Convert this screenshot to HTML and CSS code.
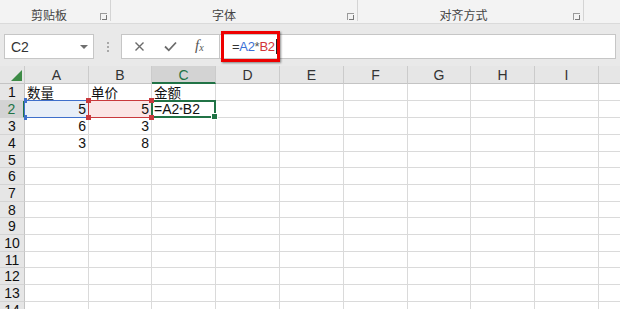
FILE: index.html
```html
<!DOCTYPE html>
<html>
<head>
<meta charset="utf-8">
<link rel="stylesheet" href="styles.css">
</head>
<body>
<div class="app">
  <div class="ribbon">
    <div class="group g1"><span class="glabel">剪贴板</span><span class="launcher"></span></div>
    <div class="group g2"><span class="glabel">字体</span><span class="launcher"></span></div>
    <div class="group g3"><span class="glabel">对齐方式</span><span class="launcher"></span></div>
    <div class="group g4"></div>
  </div>
  <div class="fbar">
    <div class="namebox"><span class="nbtext">C2</span><span class="nbarrow"></span></div>
    <div class="dots"><i></i><i></i><i></i></div>
    <div class="fbox">
      <div class="fbtns">
        <svg class="ico" width="11" height="11" viewBox="0 0 11 11"><path d="M1.5 1.5 L9.5 9.5 M9.5 1.5 L1.5 9.5" stroke="#6b6b6b" stroke-width="1.4" fill="none"/></svg>
        <svg class="ico" width="13" height="11" viewBox="0 0 13 11"><path d="M1 5.5 L4.8 9.3 L12 1.5" stroke="#6b6b6b" stroke-width="1.8" fill="none"/></svg>
        <span class="fx"><i>f</i><sub>x</sub></span>
      </div>
      <div class="finput">
        <span class="t-eq">=</span><span class="t-a">A2</span><span class="t-op">*</span><span class="t-b">B2</span><span class="caret"></span>
      </div>
      <div class="annot"></div>
    </div>
  </div>
  <div class="sheet">
    <div class="row head">
      <div class="corner"><span class="tri"></span></div><div>A</div><div>B</div><div class="hsel">C</div><div>D</div><div>E</div><div>F</div><div>G</div><div>H</div><div>I</div><div></div>
    </div>
    <div class="row"><div class="rh">1</div><div class="tl">数量</div><div class="tl">单价</div><div class="tl">金额</div><div></div><div></div><div></div><div></div><div></div><div></div><div></div></div>
    <div class="row"><div class="rh rsel">2</div><div class="num selA">5<i class="h htl"></i><i class="h hbl"></i></div><div class="num selB">5<i class="h htl"></i><i class="h hbl"></i><i class="h htr"></i><i class="h hbr"></i></div><div class="tl selC">=A2<span class="star">*</span>B2<i class="fill"></i></div><div></div><div></div><div></div><div></div><div></div><div></div><div></div></div>
    <div class="row"><div class="rh">3</div><div class="num">6</div><div class="num">3</div><div></div><div></div><div></div><div></div><div></div><div></div><div></div><div></div></div>
    <div class="row"><div class="rh">4</div><div class="num">3</div><div class="num">8</div><div></div><div></div><div></div><div></div><div></div><div></div><div></div><div></div></div>
    <div class="row short"><div class="rh">5</div><div></div><div></div><div></div><div></div><div></div><div></div><div></div><div></div><div></div><div></div></div>
    <div class="row"><div class="rh">6</div><div></div><div></div><div></div><div></div><div></div><div></div><div></div><div></div><div></div><div></div></div>
    <div class="row"><div class="rh">7</div><div></div><div></div><div></div><div></div><div></div><div></div><div></div><div></div><div></div><div></div></div>
    <div class="row short"><div class="rh">8</div><div></div><div></div><div></div><div></div><div></div><div></div><div></div><div></div><div></div><div></div></div>
    <div class="row"><div class="rh">9</div><div></div><div></div><div></div><div></div><div></div><div></div><div></div><div></div><div></div><div></div></div>
    <div class="row"><div class="rh">10</div><div></div><div></div><div></div><div></div><div></div><div></div><div></div><div></div><div></div><div></div></div>
    <div class="row short"><div class="rh">11</div><div></div><div></div><div></div><div></div><div></div><div></div><div></div><div></div><div></div><div></div></div>
    <div class="row"><div class="rh">12</div><div></div><div></div><div></div><div></div><div></div><div></div><div></div><div></div><div></div><div></div></div>
    <div class="row"><div class="rh">13</div><div></div><div></div><div></div><div></div><div></div><div></div><div></div><div></div><div></div><div></div></div>
    <div class="row"><div class="rh">14</div><div></div><div></div><div></div><div></div><div></div><div></div><div></div><div></div><div></div><div></div></div>
  </div>
</div>
</body>
</html>
```
FILE: styles.css
```css
html, body { margin: 0; padding: 0; }
body {
  width: 620px; height: 309px; overflow: hidden;
  background: #ffffff;
  font-family: "Liberation Sans", "Noto Sans CJK SC", sans-serif;
}
.app { width: 620px; height: 309px; display: flex; flex-direction: column; overflow: hidden; }

/* ribbon */
.ribbon {
  height: 23px; flex: none; display: flex;
  background: #f3f3f3; border-bottom: 1px solid #dadada;
}
.group {
  position: relative; height: 21px; border-right: 1px solid #d4d4d4;
  display: flex; justify-content: center; align-items: flex-end; padding-right: 12px; box-sizing: border-box;
}
.g1 { width: 111px; }
.g2 { width: 247px; padding-right: 20px; }
.g3 { width: 226px; padding-right: 14px; }
.g4 { flex: 1; border-right: none; }
.glabel { font-family: "Noto Sans CJK SC", sans-serif; font-size: 12px; color: #444; line-height: 14px; margin-bottom: -1px; }
.launcher {
  position: absolute; right: 3px; bottom: 1px; width: 6px; height: 6px;
  border-left: 1px solid #9a9a9a; border-top: 1px solid #9a9a9a;
}
.launcher::after {
  content: ""; position: absolute; left: 1px; top: 1px; width: 4px; height: 4px;
  border-right: 1px solid #777; border-bottom: 1px solid #777;
}

/* formula bar */
.fbar {
  height: 42px; flex: none; box-sizing: border-box;
  background: #e9e9e9; display: flex; align-items: flex-start;
  padding: 10px 4px 0 4px;
}
.namebox {
  width: 90px; height: 25px; box-sizing: border-box; background: #fff;
  border: 1px solid #c6c6c6; display: flex; align-items: center; justify-content: space-between;
  padding: 0 5px 0 6px;
}
.nbtext { font-size: 14px; color: #333; }
.nbarrow { width: 0; height: 0; border-left: 4px solid transparent; border-right: 4px solid transparent; border-top: 4px solid #6f6f6f; }
.dots { width: 27px; height: 25px; display: flex; flex-direction: column; align-items: center; justify-content: center; gap: 2px; }
.dots i { width: 2px; height: 2px; background: #a8a8a8; }
.fbox { position: relative; flex: 1; height: 25px; display: flex; }
.fbtns {
  width: 98px; height: 25px; box-sizing: border-box; background: #fff;
  border: 1px solid #c6c6c6; border-right: none;
  display: flex; align-items: center; padding-left: 12px; gap: 19px;
}
.fx { font-family: "Liberation Serif", serif; color: #555; font-size: 15px; margin-left: -1px; line-height: 15px; }
.fx i { font-style: italic; }
.fx sub { font-size: 10px; font-style: italic; vertical-align: -1px; }
.finput {
  flex: 1; height: 25px; box-sizing: border-box; background: #fff;
  border: 1px solid #c6c6c6; display: flex; align-items: center; padding-left: 12px;
  font-size: 13px; letter-spacing: -0.3px;
}
.t-eq { color: #333; }
.t-a { color: #3b6fd6; }
.t-op { color: #555; }
.t-b { color: #d13438; }
.caret { width: 1px; height: 15px; background: #222; margin-left: 1px; }
.annot {
  position: absolute; left: 100px; top: -3px; width: 59px; height: 31px; box-sizing: border-box;
  border: 3px solid #ee0000; box-shadow: 1px 1px 2px rgba(0,0,0,0.45);
}

/* sheet */
.sheet { flex: 1; overflow: hidden; }
.row { display: flex; height: 17px; }
.row.short { height: 16px; }
.row > div {
  flex: none; width: 64px; box-sizing: border-box; position: relative;
  border-right: 1px solid #dadada; border-bottom: 1px solid #dadada;
  font-size: 14px; line-height: 16px; color: #111; padding: 0 2px; white-space: nowrap;
}
.row > :nth-child(1) { width: 25px; }
.row > :nth-child(3), .row > :nth-child(8) { width: 63px; }
.row.head { height: 18px; }
.row.head > div {
  background: #e6e6e6; border-right: 1px solid #cbcbcb; border-bottom: 1px solid #c4c4c4;
  text-align: center; color: #333; line-height: 18px; font-size: 14px;
}
.row.head > .hsel { background: #d3d3d3; color: #217346; border-bottom: 2px solid #217346; }
.corner { overflow: hidden; }
.tri {
  position: absolute; right: 2px; bottom: 2px; width: 11px; height: 11px;
  background: #3d8b46; clip-path: polygon(100% 0, 100% 100%, 0 100%);
}
.rh {
  background: #e6e6e6; text-align: center; color: #333;
  border-right: 1px solid #c4c4c4 !important; border-bottom: 1px solid #d4d4d4 !important;
}
.rh.rsel { background: #d3d3d3; color: #217346; border-right: 2px solid #217346 !important; }
.tl { font-family: "Noto Sans CJK SC", sans-serif; font-size: 13.5px !important; line-height: 16px !important; }
.num { text-align: right; }
.selA { background: #e7eef8; }
.selA::after {
  content: ""; position: absolute; left: -1px; top: -1px; right: -1px; bottom: -1px;
  border: 1px solid #3e6fcb;
}
.selB { background: #fbe5e5; }
.selB::after {
  content: ""; position: absolute; left: -1px; top: -1px; right: -1px; bottom: -1px;
  border: 1px solid #c9393d;
}
.h { position: absolute; width: 5px; height: 5px; z-index: 2; }
.selA .h { background: #3e6fcb; width: 3px; }
.selB .h { background: #c9393d; }
.selA .htl { left: -1px; top: -3px; }
.selA .hbl { left: -1px; bottom: -3px; }
.selB .htl { left: -3px; top: -3px; }
.selB .hbl { left: -3px; bottom: -3px; }
.selB .htr { right: -3px; top: -3px; }
.selB .hbr { right: -3px; bottom: -3px; }
.selC { font-family: "Liberation Sans", sans-serif !important; font-size: 14px !important; }
.selC::after {
  content: ""; position: absolute; left: -1px; top: -1px; right: -1px; bottom: -1px;
  border: 2px solid #217346; z-index: 1;
}
.star { font-size: 9px; vertical-align: 1px; }
.fill {
  position: absolute; right: -3px; bottom: -3px; width: 5px; height: 5px;
  background: #217346; border: 1px solid #fff; z-index: 3;
}
```
